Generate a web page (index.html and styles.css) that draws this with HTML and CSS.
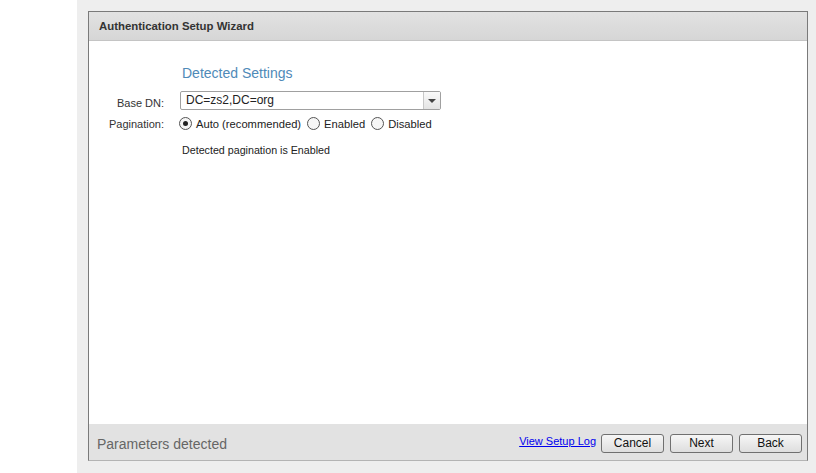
FILE: index.html
```html
<!DOCTYPE HTML>
<html lang=en>
	<head>
		<meta charset=utf-8>
		<title>Authentication Setup Wizard</title>
		<link rel="stylesheet" href="styles.css">
	</head>
	<body>
		<div class=side></div>
		<div class=main>
			<div class=wizard>
				<div class=header>Authentication Setup Wizard</div>
				<div class=content>
					<div class=title>Detected Settings</div>
					<div class=form>
						<label class=lbl>Base DN:</label>
						<div class=select>
							<span class=selectText>DC=zs2,DC=org</span>
							<span class=selectArrow><span class=tri></span></span>
						</div>
						<label class=lbl>Pagination:</label>
						<div class=radios>
							<span class=radio><span class="dot on"></span>Auto (recommended)</span>
							<span class=radio><span class=dot></span>Enabled</span>
							<span class=radio><span class=dot></span>Disabled</span>
						</div>
						<span></span>
						<div class=note>Detected pagination is Enabled</div>
					</div>
				</div>
				<div class=footer>
					<span class=status>Parameters detected</span>
					<a class=log href="#">View Setup Log</a>
					<button class=btn>Cancel</button>
					<button class=btn>Next</button>
					<button class=btn>Back</button>
				</div>
			</div>
		</div>
	</body>
</html>
```
FILE: styles.css
```css
html, body {
	margin: 0;
	padding: 0;
	height: 100%;
}

body {
	display: flex;
	font-family: "Liberation Sans", Arial, sans-serif;
	font-size: 11px;
	color: #222;
	background: #fff;
}

.side {
	width: 77px;
	flex: none;
}

.main {
	flex: 1;
	background: #eeeeee;
	padding: 11px 8px 12px 11px;
}

.wizard {
	display: flex;
	flex-direction: column;
	height: 450px;
	border: 1px solid #7a7a7a;
	border-bottom-color: #b4b4b4;
	background: #fff;
	box-sizing: border-box;
}

.header {
	height: 29px;
	line-height: 28px;
	padding-left: 10px;
	font-weight: bold;
	font-size: 11.4px;
	color: #333;
	background: linear-gradient(#e2e2e2, #d6d6d6);
	border-bottom: 1px solid #c4c4c4;
	box-sizing: border-box;
}

.content {
	flex: 1;
	padding: 24px 0 0 0;
}

.title {
	margin-left: 93px;
	font-size: 14px;
	color: #4f8ab8;
	height: 20px;
}

.form {
	display: grid;
	grid-template-columns: 75px auto;
	column-gap: 16px;
	row-gap: 0;
	margin-top: 6px;
	align-items: center;
}

.lbl {
	text-align: right;
	color: #333;
}

.select {
	display: flex;
	width: 261px;
	height: 19px;
	border: 1px solid #a0a0a0;
	border-radius: 2px;
	box-sizing: border-box;
	margin-bottom: 5px;
}

.selectText {
	flex: 1;
	padding-left: 5px;
	line-height: 17px;
	font-size: 12px;
	color: #222;
}

.selectArrow {
	width: 16px;
	border-left: 1px solid #c8c8c8;
	background: linear-gradient(#fafafa, #e4e4e4);
	display: flex;
	align-items: center;
	justify-content: center;
}

.tri {
	width: 0;
	height: 0;
	border-left: 4px solid transparent;
	border-right: 4px solid transparent;
	border-top: 4px solid #444;
}

.radios {
	display: flex;
	align-items: center;
	gap: 6px;
	font-size: 11.2px;
	height: 17px;
	margin-left: -1px;
}

.radio {
	display: flex;
	align-items: center;
	gap: 4px;
}

.dot {
	width: 13px;
	height: 13px;
	border: 1px solid #555;
	border-radius: 50%;
	box-sizing: border-box;
	background: #f6f6f6;
	display: flex;
	align-items: center;
	justify-content: center;
}

.dot.on::after {
	content: "";
	width: 5px;
	height: 5px;
	border-radius: 50%;
	background: #222;
}

.note {
	margin-top: 12px;
	margin-left: 2px;
	font-size: 10.7px;
}

.footer {
	height: 36px;
	display: flex;
	align-items: center;
	gap: 6px;
	padding: 2px 5px 0 8px;
	box-sizing: border-box;
	background: #e2e2e2;
}

.status {
	flex: 1;
	font-size: 14px;
	color: #666;
	padding-top: 2px;
}

.log {
	color: #0000ee;
	font-size: 11px;
	margin-right: -1px;
	margin-top: -5px;
}

.btn {
	width: 63px;
	height: 19px;
	padding: 0;
	font-family: "Liberation Sans", Arial, sans-serif;
	font-size: 12px;
	color: #111;
	border: 1px solid #707070;
	border-radius: 3px;
	background: linear-gradient(#f6f6f6, #dedede);
}
```
